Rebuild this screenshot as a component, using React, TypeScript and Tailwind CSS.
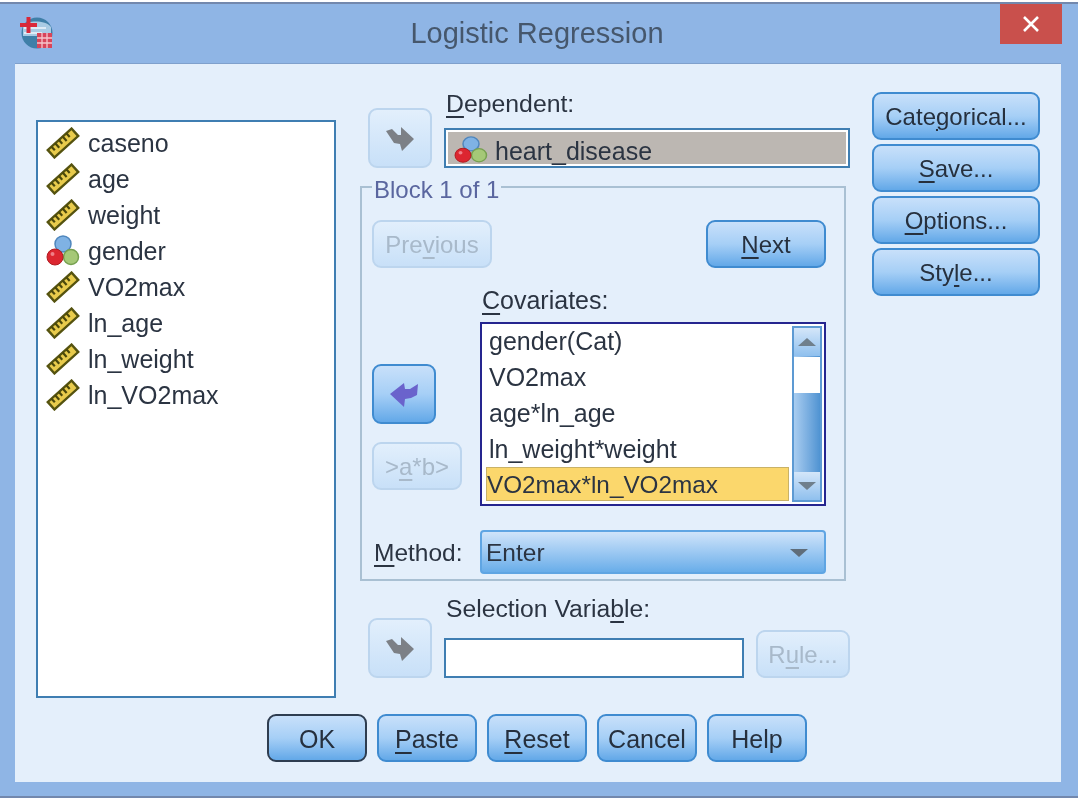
import React from 'react';

const sans = { fontFamily: '"Liberation Sans", Arial, sans-serif' };

const U: React.FC<{ children: React.ReactNode }> = ({ children }) => (
  <u className="decoration-2 underline-offset-[4px]">{children}</u>
);

const Ruler: React.FC = () => (
  <svg width="34" height="32" viewBox="0 0 34 32" className="shrink-0">
    <g transform="rotate(-42 17 16)">
      <rect x="1" y="11" width="32" height="10" fill="#e8cb4c" stroke="#55530f" strokeWidth="2.4" />
      <path d="M6 11v5M11 11v6M16 11v5M21 11v6M26 11v5" stroke="#4a480c" strokeWidth="2.2" />
    </g>
  </svg>
);

const Balls: React.FC<{ h?: number }> = ({ h = 32 }) => (
  <svg width="34" height={h} viewBox="0 0 34 32" preserveAspectRatio="none" className="shrink-0">
    <circle cx="17" cy="9" r="8" fill="#7fb2e4" stroke="#4f86bd" strokeWidth="1.5" />
    <circle cx="25" cy="22" r="7.500" fill="#a5c877" stroke="#76a050" strokeWidth="1.5" />
    <circle cx="9" cy="22" r="8" fill="#dc2630" stroke="#b01a20" strokeWidth="1" />
    <circle cx="6.500" cy="19" r="2" fill="#f08088" />
  </svg>
);

const ArrowRight: React.FC = () => (
  <svg width="30" height="26" viewBox="0 0 30 26">
    <path d="M1 5 L7 3 L13 9 L16 9 L16 1 L29 13 L17 25 L15 18 L9 17 Z" fill="#7c8086" />
  </svg>
);

const ArrowLeft: React.FC = () => (
  <svg width="30" height="26" viewBox="0 0 30 26">
    <path d="M1 12 L15 1 L16 7 L21 7 L29 2 L28 13 L22 16 L16 17 L15 25 Z" fill="#6a63cc" />
  </svg>
);

const AppIcon: React.FC = () => (
  <svg width="33" height="33" viewBox="0 0 33 33">
    <circle cx="17" cy="17" r="15.500" fill="#3f7fa8" />
    <path d="M3 9C8 4 26 4 31 11V20H3z" fill="#a9cbe4" />
    <path d="M4 12h22M4 17h18" stroke="#f0f6fb" strokeWidth="1.5" />
    <path d="M0 9h17M8.500 1v16" stroke="#d9283a" strokeWidth="4" />
    <rect x="17" y="17" width="15" height="15" fill="#d8455a" />
    <path d="M17 22h15M17 27h15M22 17v15M27 17v15" stroke="#f5c6cc" strokeWidth="1.3" />
  </svg>
);

const Btn: React.FC<{ className?: string; children?: React.ReactNode }> = ({ className, children }) => (
  <div className={`flex items-center justify-center rounded-[9px] border-2 border-[#3f8bd0] bg-gradient-to-b from-[#c8e0fa] via-[#a6cff6] to-[#62a8e8] pt-[2px] text-[#26303e] ${className ?? ''}`}>
    {children}
  </div>
);

const Off: React.FC<{ className?: string; children?: React.ReactNode }> = ({ className, children }) => (
  <div className={`flex items-center justify-center rounded-[9px] border-2 border-[#bcd5ee] bg-gradient-to-b from-[#e2effc] to-[#c8e0f8] pt-[2px] text-[#a8b9ca] ${className ?? ''}`}>
    {children}
  </div>
);

const Row: React.FC<{ icon: React.ReactNode; label: string }> = ({ icon, label }) => (
  <div className="flex h-[36px] items-center">
    <div className="flex w-[46px] justify-center">{icon}</div>
    <span className="ml-[2px]">{label}</span>
  </div>
);

export default function App() {
  const vars: [React.ReactNode, string][] = [
    [<Ruler />, 'caseno'],
    [<Ruler />, 'age'],
    [<Ruler />, 'weight'],
    [<Balls />, 'gender'],
    [<Ruler />, 'VO2max'],
    [<Ruler />, 'ln_age'],
    [<Ruler />, 'ln_weight'],
    [<Ruler />, 'ln_VO2max'],
  ];

  return (
    <div style={sans} className="flex h-[798px] w-[1078px] flex-col overflow-hidden border-y-2 border-t-white border-b-[#7388ad] bg-[#8fb5e5] text-[25px] leading-[24px] text-[#2b3442] blur-[0.5px]">
      {/* title bar */}
      <div className="flex h-[61px] shrink-0 items-start border-t-2 border-[#7388ad]">
        <div className="w-[78px] pl-[20px] pt-[12px]"><AppIcon /></div>
        <div className="flex-1 pt-[17px] pr-[4px] text-center text-[29px] text-[#46576c]">Logistic Regression</div>
        <div className="mr-[16px] flex h-[40px] w-[62px] items-center justify-center bg-[#c9504c]">
          <svg width="18" height="18" viewBox="0 0 18 18"><path d="M2 2L16 16M16 2L2 16" stroke="#fff" strokeWidth="2.6" /></svg>
        </div>
      </div>

      {/* dialog body */}
      <div className="ml-[15px] mr-[17px] flex h-[719px] flex-col border-t border-[#7fa0cc] bg-[#e4effb] pl-[21px] pt-[28px]">
        <div className="flex h-[606px] items-start">
          <div className="mt-[28px] h-[578px] w-[300px] border-2 border-[#3f7eb2] bg-white pl-[2px] pt-[3px]">
            {vars.map(([icon, label]) => <Row key={label} icon={icon} label={label} />)}
          </div>

          <div className="ml-[24px] w-[490px]">
            {/* dependent */}
            <div className="flex pl-[8px]">
              <Off className="mt-[16px] h-[60px] w-[64px]"><ArrowRight /></Off>
              <div className="ml-[12px]">
                <div className="h-[24px] pl-[2px] text-[24.8px]"><U>D</U>ependent:</div>
                <div className="mt-[12px] h-[40px] w-[406px] border-2 border-[#3f7eb2] bg-white p-[2px]">
                  <div className="flex h-[32px] items-center bg-[#bcb7b2] pl-[6px]">
                    <div className="pt-[3px]"><Balls h={28} /></div>
                    <span className="ml-[7px] pt-[5px]">heart_disease</span>
                  </div>
                </div>
              </div>
            </div>

            {/* block */}
            <div className="relative mt-[18px] h-[395px] w-[486px] border-2 border-[#a9c0d3] pl-[10px] pr-[18px] pt-[32px]">
              <span className="absolute -top-[10px] left-[10px] bg-[#e4effb] px-[2px] text-[24px] text-[#5a669f]">Block 1 of 1</span>
              <div className="flex justify-between text-[24px]">
                <Off className="h-[48px] w-[120px]"><span>Pre<U>v</U>ious</span></Off>
                <Btn className="h-[48px] w-[120px]"><span><U>N</U>ext</span></Btn>
              </div>
              <div className="mt-[20px] flex">
                <div className="w-[108px] pt-[76px]">
                  <Btn className="h-[60px] w-[64px]"><ArrowLeft /></Btn>
                  <Off className="mt-[18px] h-[48px] w-[90px] text-[24px]"><span>&gt;<U>a</U>*b&gt;</span></Off>
                </div>
                <div className="w-[346px]">
                  <div className="h-[24px] pl-[2px]"><U>C</U>ovariates:</div>
                  <div className="mt-[10px] flex h-[184px] border-2 border-[#25258f] bg-white p-[2px]">
                    <div className="-mt-[3px] flex-1 pl-[2px] pr-[3px]">
                      {['gender(Cat)', 'VO2max', 'age*ln_age', 'ln_weight*weight'].map((t) => (
                        <div key={t} className="flex h-[36px] items-center pl-[3px]">{t}</div>
                      ))}
                      <div className="flex h-[34px] items-center border border-[#c9b267] bg-[#fbd76c] pt-[2px] text-[24.3px]">VO2max*ln_VO2max</div>
                    </div>
                    <div className="flex w-[30px] flex-col border-2 border-[#5d9ad3] bg-gradient-to-r from-[#a9cdf0] to-[#4f93d2]">
                      <div className="flex h-[28px] items-center justify-center bg-gradient-to-b from-[#d4e6f9] to-[#8fc0ee]">
                        <div className="h-0 w-0 border-x-[9px] border-b-[8px] border-x-transparent border-b-[#6f7f8c]" />
                      </div>
                      <div className="mt-[1px] h-[36px] bg-white" />
                      <div className="flex-1" />
                      <div className="flex h-[28px] items-center justify-center bg-gradient-to-b from-[#d4e6f9] to-[#8fc0ee]">
                        <div className="h-0 w-0 border-x-[9px] border-t-[8px] border-x-transparent border-t-[#6f7f8c]" />
                      </div>
                    </div>
                  </div>
                </div>
              </div>
              <div className="mt-[24px] flex items-center">
                <div className="w-[108px] pl-[2px] pt-[2px] text-[24.5px]"><U>M</U>ethod:</div>
                <div className="flex h-[44px] w-[346px] items-center justify-between rounded-[4px] border-2 border-[#5fa5e3] bg-gradient-to-b from-[#cfe4fa] to-[#68ade9] pl-[4px] pr-[16px] pt-[2px] text-[24.5px]">
                  <span>Enter</span>
                  <div className="h-0 w-0 border-x-[9px] border-t-[8px] border-x-transparent border-t-[#5f6d7a]" />
                </div>
              </div>
            </div>

            {/* selection variable */}
            <div className="mt-[16px] flex pl-[8px]">
              <Off className="mt-[21px] h-[60px] w-[64px]"><ArrowRight /></Off>
              <div className="ml-[12px]">
                <div className="h-[24px] pl-[2px] text-[24.7px]">Selection Varia<U>b</U>le:</div>
                <div className="mt-[17px] h-[40px] w-[300px] border-2 border-[#3f7eb2] bg-white" />
              </div>
              <Off className="ml-[12px] mt-[33px] h-[48px] w-[94px] text-[24px]"><span>R<U>u</U>le...</span></Off>
            </div>
          </div>

          {/* side buttons */}
          <div className="ml-[22px] flex w-[168px] flex-col gap-[4px] text-[24px]">
            <Btn className="h-[48px]"><span>Cate<U>g</U>orical...</span></Btn>
            <Btn className="h-[48px]"><span><U>S</U>ave...</span></Btn>
            <Btn className="h-[48px]"><span><U>O</U>ptions...</span></Btn>
            <Btn className="h-[48px]"><span>Sty<U>l</U>e...</span></Btn>
          </div>
        </div>

        {/* bottom buttons */}
        <div className="ml-[231px] mt-[16px] flex gap-[10px]">
          <Btn className="h-[48px] w-[100px] border-[#2e3d50]!">OK</Btn>
          <Btn className="h-[48px] w-[100px]"><span><U>P</U>aste</span></Btn>
          <Btn className="h-[48px] w-[100px]"><span><U>R</U>eset</span></Btn>
          <Btn className="h-[48px] w-[100px]">Cancel</Btn>
          <Btn className="h-[48px] w-[100px]">Help</Btn>
        </div>
      </div>
    </div>
  );
}
